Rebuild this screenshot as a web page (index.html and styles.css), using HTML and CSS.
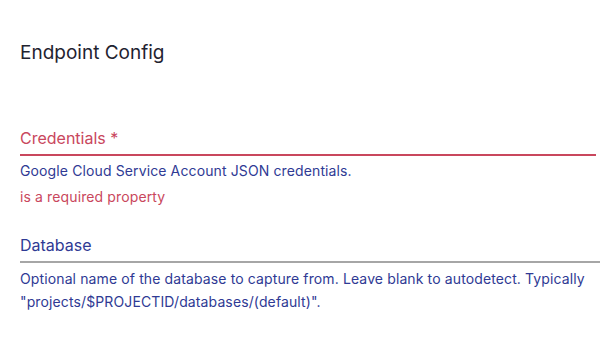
FILE: index.html
```html
<!DOCTYPE html>
<html lang="en">
<head>
    <meta charset="UTF-8">
    <meta name="viewport" content="width=device-width, initial-scale=1.0">
    <title>Endpoint Config</title>
    <link rel="stylesheet" href="styles.css">
</head>
<body>
    <div class="page">
        <h2 class="title">Endpoint Config</h2>
        <div class="field error">
            <label class="field-label">Credentials<span class="req"> *</span></label>
            <div class="field-line"></div>
            <p class="field-help">Google Cloud Service Account JSON credentials.</p>
            <p class="field-error">is a required property</p>
        </div>
        <div class="field wide">
            <label class="field-label">Database</label>
            <div class="field-line"></div>
            <p class="field-help">Optional name of the database to capture from. Leave blank to autodetect. Typically "projects/$PROJECTID/databases/(default)".</p>
        </div>
    </div>
</body>
</html>
```

FILE: styles.css
```css
body {
    margin: 0;
    font-family: 'Inter', sans-serif;
    background: #fff;
}
.page {
    padding: 39px 4px 0 20px;
}
.title {
    margin: 0 0 59px;
    font-size: 19px;
    font-weight: 400;
    line-height: 28px;
    color: #1f2330;
}
.field {
    margin-bottom: 25px;
}
.wide {
    margin-right: -4px;
}
.field-label {
    display: block;
    font-size: 16px;
    line-height: 24px;
    color: #2f3a94;
}
.field-line {
    height: 2px;
    margin-top: 4px;
    background: #a6a6a6;
}
.field-help {
    margin: 3px 0 0;
    font-size: 14px;
    line-height: 23px;
    letter-spacing: 0.12px;
    color: #2f3a94;
}
.wide .field-help {
    margin-top: 4px;
}
.field-error {
    margin: 3px 0 0;
    font-size: 14px;
    line-height: 23px;
    letter-spacing: 0.12px;
    color: #c9475d;
}
.error .field-label {
    color: #c9475d;
}
.error .field-line {
    background: #c9475d;
}
```
